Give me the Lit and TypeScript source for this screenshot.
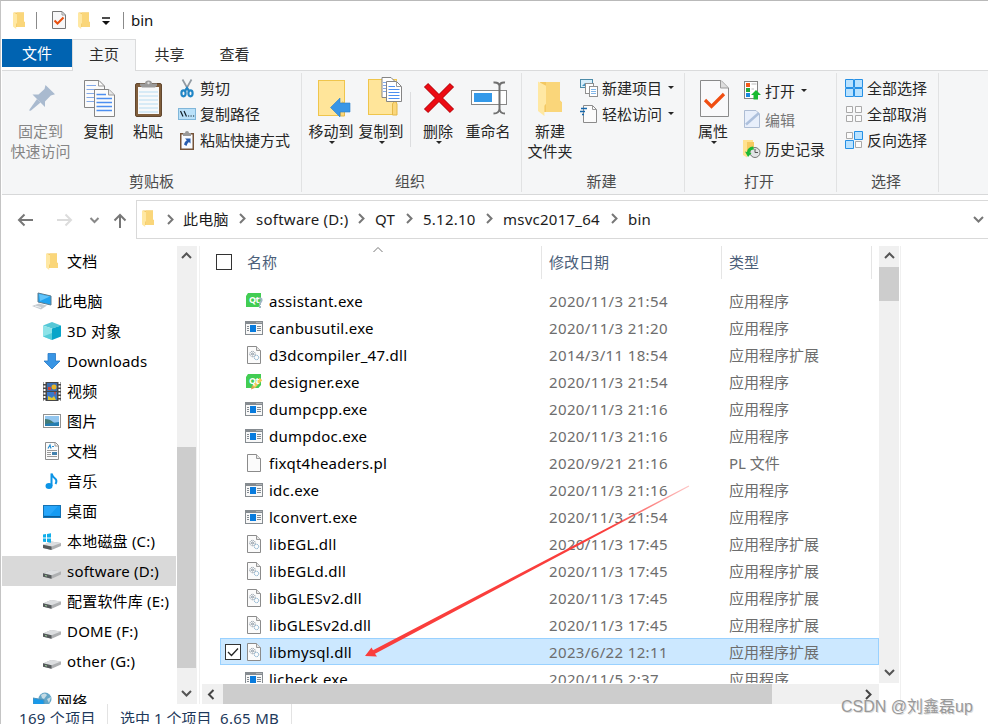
import { LitElement, html, css, svg, nothing } from "lit";
import { customElement, property } from "lit/decorators.js";
import { classMap } from "lit/directives/class-map.js";

const icon = (w: number, h: number, body: unknown) =>
  html`<svg width=${w} height=${h} viewBox="0 0 ${w} ${h}" fill="none">${body}</svg>`;

const folder = (w: number, h: number) => html`<svg width=${w} height=${h} viewBox="0 0 12 17" preserveAspectRatio="none" fill="none">
  <path d="M1 .5H11V9.5L12 10.5V15H3Z" fill="#f3c862"/><path d="M4 .5H11V9.5L12 10.5V15H4Z" fill="#fad67a"/>
  <path d="M0 .3 4 2.3V11L3.2 12V17L0 14.6Z" fill="#ffe8a3"/></svg>`;

const page = svg`<path d="M.5.5H9.5L13.5 4.5V17.5H.5Z" fill="#fbfbfb" stroke="#8b8b8b"/><path d="M9.5.5V4.5H13.5" fill="#e6e6e6" stroke="#999"/>`;

const icons: Record<string, () => unknown> = {
  folder: () => folder(12, 17),
  folderBig: () => folder(24, 35),
  check: () => icon(14, 18, svg`<path d="M.5.5H10L13.5 4V17.5H.5Z" fill="#f7f7f8" stroke="#777"/><path d="M10 .5V4H13.5" stroke="#999"/><path d="M2.5 9.5 5.5 12.5 11.5 6.5" stroke="#e8500f" stroke-width="2"/>`),
  pin: () => icon(28, 28, svg`<g fill="#a9bacf"><path d="M17.5 1 27 10.300 22.800 11.500 17 17.500V23L4.500 10.500H10.500L16.500 5Z"/><path d="M9 15 12.500 18.500 3 26.500 1.500 27V25.500Z"/></g>`),
  copy: () => icon(31, 37, svg`<path d="M.5.500H15L20.500 6V27.500H.5Z" fill="#fbfbfb" stroke="#858585"/><path d="M14.500.5V6H20" stroke="#999"/><path d="M2.500 5.500H12M2.500 9.500H18M2.500 13.500H18M2.500 17.500H18M2.500 21.500H18" stroke="#83a9e8"/><path d="M10.500 9.500H25L30.500 15V36.500H10.500Z" fill="#fbfbfb" stroke="#858585"/><path d="M24.500 9.500V15H30" fill="#e7e7e7" stroke="#999"/><path d="M12.500 14.500H22M12.500 18.500H28M12.500 22.500H28M12.500 26.500H28M12.500 30.500H28" stroke="#4d8ff0" stroke-width="1.300"/>`),
  paste: () => icon(27, 37, svg`<rect x=".5" y="3.500" width="26" height="33" rx="1.500" fill="#805e3c" stroke="#61472f"/><rect x="3" y="7" width="21" height="27" fill="#f8f9fa"/><path d="M4 12H23M4 16H23M4 20H23M4 24H23M4 28H23M4 32H23" stroke="#b7dcf2"/><path d="M5 3.500H10Q10 .5 13.500 .5T17 3.500H22V5.500L20 7.500H7L5 5.500Z" fill="#9a9a9a"/><circle cx="13.500" cy="3" r="1.200" fill="#ddd"/>`),
  cut: () => icon(18, 19, svg`<path d="M4.500.5 11.500 13M13.500.5 6.500 13" stroke="#929aa2" stroke-width="1.700"/><g stroke="#2186c6" stroke-width="2.200"><ellipse cx="5.500" cy="14.300" rx="2.100" ry="3"/><ellipse cx="12.500" cy="14.300" rx="2.100" ry="3"/><path d="M7 12 9 9 11 12"/></g>`),
  path: () => icon(18, 12, svg`<rect x=".5" y=".5" width="17" height="11" fill="#b9e0f8" stroke="#80b6d9"/><path d="M2.500 3 5 8.500M6 3 8.500 8.500M10 8H11.200M12.500 8H13.700M15 8H16.200" stroke="#12202a" stroke-width="1.200"/>`),
  shortcut: () => icon(14, 19, svg`<rect x=".75" y="2.750" width="12.500" height="15.500" fill="#f8fbff" stroke="#755338" stroke-width="1.500"/><path d="M3 2H5Q5 0 7 0T9 2H11V5H3Z" fill="#999"/><path d="M5 7.500H10.500V12.500L8.900 11Q7 12.500 6.500 15L4 13.500Q4.500 10.500 6.800 9.200Z" fill="#275cae"/>`),
  moveTo: () => icon(33, 37, svg`<rect x=".5" y=".5" width="26" height="35" fill="#ffe59a" stroke="#efc54c"/><path d="M22.500 36V25Q25 19 26.500 25V36Z" fill="#fbd77b" stroke="#e4b84a"/><path d="M12.500 27.500 22 18V23H32V32H22V37Z" fill="#3996e6" stroke="#287fc9" stroke-width=".6"/>`),
  copyTo: () => icon(34, 39, svg`<rect x=".5" y="2.500" width="28" height="35" fill="#ffe59a" stroke="#efc54c"/><path d="M24.500 38V27Q27 22 29 27V38Z" fill="#fbd77b" stroke="#e4b84a"/><path d="M14 .5H23L27.500 5V20.500H14Z" fill="#fff" stroke="#858585"/><path d="M15 5.500H23M15 8.500H20M15 11.500H20M15 14.500H20" stroke="#83a9e8"/><path d="M18.500 4.500H28.500L33.500 9.500V24.500H18.500Z" fill="#fff" stroke="#858585"/><path d="M28.500 4.500V9.500H33" stroke="#999"/><path d="M20.500 9.500H27M20.500 12.500H31.500M20.500 15.500H31.500M20.500 18.500H31.500M20.500 21.500H31.500" stroke="#4d8ff0"/>`),
  remove: () => icon(32, 32, svg`<path d="M3 3 29 29M29 3 3 29" stroke="#b50c12" stroke-width="6"/><path d="M3.500 3.500 28.500 28.500M28.500 3.500 3.500 28.500" stroke="#ec0b13" stroke-width="4.300"/>`),
  rename: () => icon(37, 34, svg`<rect x=".5" y="9.500" width="35" height="14" fill="#fff" stroke="#878787"/><rect x="3" y="12" width="18" height="9" fill="#3399e9"/><path d="M22.500 1.500Q28 1 28.500 5Q29 1 34 1.500M28.500 5V28M22.500 32.500Q28 32.500 28.500 28Q29 32.500 34 32.500" stroke="#707070" stroke-width="2"/>`),
  newItem: () => icon(18, 19, svg`<rect x=".5" y=".5" width="12" height="8" fill="#d8effb" stroke="#4c8ba8"/><path d="M2 7 5 4 8 7Z" fill="#4596c4"/><rect x="5.500" y="4.500" width="8" height="10" fill="#fff" stroke="#909090"/><rect x="9.500" y="7.500" width="8" height="10" fill="#fff" stroke="#909090"/><path d="M11 10.500H16M11 12.500H16M11 14.500H16" stroke="#83b7e9"/>`),
  easy: () => icon(18, 18, svg`<path d="M3.500.5H12.500L16.500 4.500V17.500H3.500Z" fill="#fbfbfb" stroke="#8b8b8b"/><path d="M12.500.5V4.500H16.500" stroke="#999"/><path d="M1 3.500H7M0 6.500H5M2 9.500H4" stroke="#1769ad" stroke-width="1.300"/>`),
  props: () => icon(29, 37, svg`<path d="M.5.500H21L28.500 8V36.500H.5Z" fill="#f9f9fa" stroke="#8a8a8a"/><path d="M20.500.500V8H28" fill="#ddd" stroke="#999"/><path d="M5 20 11.500 26.500 24 14" stroke="#f04e12" stroke-width="3.200"/>`),
  open: () => icon(18, 19, svg`<rect x="1.500" y=".5" width="13" height="17" fill="#fff" stroke="#858585"/><rect x="3" y="2" width="4" height="4" fill="#f35a18"/><rect x="3" y="7" width="4" height="4" fill="#23aa3b"/><rect x="3" y="12" width="4" height="4" fill="#1686df"/><path d="M8.500 3H13.500M8.500 8H11" stroke="#bbb"/><path d="M8 14 13 9 18 14H15V18.500H10.500V14Z" fill="#19ba31"/>`),
  edit: () => icon(18, 19, svg`<path d="M1.500.500H13L16.500 4V17.500H1.500Z" fill="#e8effb" stroke="#aebdd4"/><path d="M3 14.500 16 3" stroke="#adc0dc" stroke-width="2.500"/>`),
  history: () => html`${icon(18, 18, svg`<path d="M0 0H10V15L4 13.500V17.500L0 15Z" fill="#ffe291"/><path d="M4 2H11V14H4Z" fill="#f6ca60"/><circle cx="12" cy="12.500" r="5" fill="#e1e4e5" stroke="#777"/><path d="M12 9V12.500H15" stroke="#555"/><path d="M10 6.500Q4.500 7 4 12L2 11.500 5 17 8.500 13 6.500 12.500Q7.500 9.500 11 9.500Z" fill="#1cb936"/>`)}`,
  all: () => icon(18, 18, svg`<g fill="#b9e2ff" stroke="#2690e5"><path d="M.5.500H8.500V8.500H.5ZM9.500.5H17.500V8.500H9.500ZM.5 9.500H8.500V17.500H.5ZM9.500 9.500H17.500V17.500H9.500Z"/></g>`),
  none: () => icon(18, 18, svg`<g fill="#fbfbfb" stroke="#a9a9a9"><path d="M1.500 1.500H7.500V7.500H1.500ZM10.500 1.500H16.500V7.500H10.500ZM1.500 10.500H7.500V16.500H1.500ZM10.500 10.500H16.500V16.500H10.500Z"/></g>`),
  invert: () => icon(18, 18, svg`<g fill="#fbfbfb" stroke="#a9a9a9"><path d="M1.500 1.500H7.500V7.500H1.500ZM10.500 10.500H16.500V16.500H10.500Z"/></g><g fill="#b9e2ff" stroke="#2690e5"><path d="M9.500.5H17.500V8.500H9.500ZM.5 9.500H8.500V17.500H.5Z"/></g>`),
  pc: () => icon(20, 18, svg`<path d="M6 1 19 4V13L6 10Z" fill="#20a2ef" stroke="#5c7c8f"/><path d="M7 2 18 4.500 8 9Z" fill="#62c4fa"/><path d="M0 14 7 11.500 15 13.500 9 17.500Z" fill="#c5cbd0"/><path d="M3 14 9 15.500" stroke="#eef1f3"/>`),
  cube: () => icon(18, 18, svg`<path d="M0 3.500 9 0 18 3.500 9 6.500Z" fill="#55c7d6"/><path d="M0 3.500 9 6.500V18L0 14.500Z" fill="#8de3e8"/><path d="M18 3.500 9 6.500V18L18 14.500Z" fill="#08a5c9"/><path d="M0 14.500 9 11V18Z" fill="#55ccd8"/>`),
  down: () => icon(18, 18, svg`<path d="M5 1.500H12.500V9H17L9 17 1 9H5Z" fill="#3995e4" stroke="#2679c5" stroke-width=".8"/>`),
  video: () => icon(18, 19, svg`<rect width="18" height="19" fill="#474747"/><path d="M1.500 0V19M16.500 0V19" stroke="#fff" stroke-width="2" stroke-dasharray="2 1.500"/><rect x="4" y="1" width="10" height="8" fill="#3c6eb1"/><rect x="4" y="10" width="10" height="8" fill="#3979cb"/><circle cx="11" cy="5" r="2.500" fill="#e8b629"/><path d="M5 8V5H8V8ZM11 10H13L12 14Z" fill="#d04538"/><path d="M5 18V14L9 16 11 14 13 18Z" fill="#e2c630"/>`),
  picture: () => icon(18, 14, svg`<rect x=".5" y=".5" width="17" height="13" fill="#fff" stroke="#929292"/><rect x="2" y="2" width="14" height="10" fill="#93c6ef"/><path d="M2 5Q7 5 10 8T16 9V12H2Z" fill="#417b78"/><path d="M2 10 16 8V12H2Z" fill="#267db1"/>`),
  doc: () => icon(18, 18, svg`<path d="M2.500.5H12.500L15.500 3.500V17.500H2.500Z" fill="#fbfbfb" stroke="#8d8d8d"/><path d="M12 .5V4H15.500" stroke="#999"/><path d="M4 8.500H14M4 10.500H8M4 12.500H8M4 14.500H14" stroke="#999"/><path d="M5 6.500 7 3 8 6.500M9 4.500H11" stroke="#2b8fd0" stroke-width="1.200"/><path d="M9 10H14V13H9Z" fill="#4481ad"/>`),
  music: () => icon(18, 18, svg`<path d="M8.500 14V1.500Q9.500 4.500 12 6.500T12.500 12" stroke="#0c94e6" stroke-width="2"/><ellipse cx="6" cy="14" rx="3.500" ry="3" fill="#0c94e6"/>`),
  desktop: () => icon(18, 13, svg`<rect x=".5" y=".5" width="17" height="12" fill="#159bf3" stroke="#1672b2"/><path d="M1 1H15L7 10H1Z" fill="#35adff" opacity=".6"/><path d="M1 11.500H17" stroke="#0c5d99"/>`),
  drive: () => icon(18, 16, svg`<path d="M0 10.500 8 7 18 8.500V11.500L8.500 15.800 0 13.500Z" fill="#aeb0b2"/><path d="M0 10.500 8 7 18 8.500 8.500 12.300Z" fill="#dcdee0"/><path d="M0 10.300 8.500 12.300V15.800L0 13.700Z" fill="#55595b"/><path d="M2 12.500 4 13" stroke="#98cf93"/>`),
  driveC: () => icon(18, 17, svg`<g transform="translate(-1)"><path d="M1 12 9 8.500 19 10V13L9.500 17 1 15Z" fill="#aeb0b2"/><path d="M1 12 9 8.500 19 10 9.500 13.600Z" fill="#dcdee0"/><path d="M1 11.800 9.500 13.600V17L1 15Z" fill="#55595b"/><path d="M0 1.500 4 1V4.500H0ZM5 .9 9 .3V4.500H5ZM0 5.500H4V9L0 8.500ZM5 5.500H9V9.700L5 9.100Z" fill="#10aeea"/></g>`),
  network: () => icon(19, 18, svg`<circle cx="12" cy="7" r="6.500" fill="#65a6c7"/><path d="M8 3Q12 0 14 3L11 7 9 6ZM14 7 18 5 16 11Z" fill="#c5dbe4"/><path d="M0 6 11 8V17L0 15Z" fill="#1999e9" stroke="#4c93bb"/>`),
  exe: () => icon(18, 14, svg`<rect x=".5" y=".5" width="17" height="13" fill="#f8f8f8" stroke="#858b90"/><path d="M0 0H18V3H0Z" fill="#858b90"/><path d="M11.500 1.500H12.500M13.500 1.500H14.500M15.500 1.500H16.500" stroke="#ddd"/><path d="M2 5.500H4M2 7.500H4M2 9.500H4M12 5.500H16M12 7.500H16M12 9.500H16" stroke="#848b91"/><rect x="5" y="4" width="6" height="7" fill="#087bdd"/>`),
  dll: () => html`${icon(14, 18, svg`${page}<g stroke="#8795a2"><circle cx="5.500" cy="8" r="2.700" stroke-dasharray="1.200 .6"/><circle cx="5.500" cy="8" r="1"/><circle cx="9.500" cy="11.500" r="2.200" stroke="#78a6c8" stroke-dasharray="1.100 .5"/></g>`)}`,
  file: () => icon(14, 18, page),
  assistant: () => html`<span class="qt">${icon(18, 15, svg`<path d="M3 0H16V11L13.500 14H1V3Z" fill="#42cd53"/><path d="M12 6.500Q13 4.500 15.500 5.500T15 10V12M15 13V15" stroke="#9fb6c4" stroke-width="2"/>`)}<b>Qt</b></span>`,
  designer: () => html`<span class="qt">${icon(18, 16, svg`<path d="M3 0H16V11L13.500 14H1V3Z" fill="#42cd53"/><path d="M8.500 13 16 5" stroke="#f0c65b" stroke-width="3.500"/><path d="M6 15.500 7 11.500 9.500 14Z" fill="#d8a14e"/>`)}<b>Qt</b></span>`,
};

const chevron = (dir: "up" | "down" | "left" | "right", cls = "") => {
  const d = { up: "M1 7 5.500 2.500 10 7", down: "M1 3 5.500 7.500 10 3", left: "M7.500 1 3 5.500 7.500 10", right: "M3 1 7.500 5.500 3 10" }[dir];
  return html`<svg class=${cls} width="11" height="11" viewBox="0 0 11 11" fill="none"><path d=${d} stroke="currentColor" stroke-width="2"/></svg>`;
};

const base = css`
  * { box-sizing: border-box; }
  svg { display: block; flex: none; }
`;

@customElement("ribbon-button")
class RibbonButton extends LitElement {
  @property() icon = "";
  @property() label = "";
  @property() second = "";
  @property({ type: Boolean }) menu = false;
  @property({ type: Boolean, reflect: true }) dim = false;
  static styles = [base, css`
    :host { display: flex; flex-direction: column; align-items: center; width: 50px; flex: none; color: #262626; }
    :host([dim]) { color: #858585; }
    .icon { height: 46px; display: flex; align-items: center; justify-content: center; }
    .copy, .remove, .rename, .pin { padding-left: 2px; }
    .props { padding-left: 3px; }
    .moveTo { padding-left: 6px; }
    .copyTo { padding-left: 7px; padding-bottom: 3px; }
    .text { line-height: 20px; white-space: nowrap; display: block; }
    .arrow { border: 3.5px solid transparent; border-top: 3.5px solid #262626; border-bottom: 0; margin-left: 2px; }
  `];
  render() {
    return html`<span class="icon ${this.icon}">${icons[this.icon]?.()}</span><span class="text">${this.label}</span>
      ${this.second ? html`<span class="text">${this.second}</span>` : nothing}
      ${this.menu ? html`<i class="arrow"></i>` : nothing}`;
  }
}

@customElement("ribbon-row")
class RibbonRow extends LitElement {
  @property() icon = "";
  @property() label = "";
  @property({ type: Boolean }) menu = false;
  @property({ type: Boolean, reflect: true }) dim = false;
  static styles = [base, css`
    :host { display: flex; align-items: center; height: 26px; color: #262626; white-space: nowrap; }
    :host([dim]) { color: #777; }
    .icon { width: 18px; margin-right: 4px; display: flex; justify-content: center; }
    .arrow { border: 3.5px solid transparent; border-top: 3.5px solid #262626; border-bottom: 0; margin: -1px 0 0 6px; }
  `];
  render() {
    return html`<span class="icon">${icons[this.icon]?.()}</span>${this.label}${this.menu ? html`<i class="arrow"></i>` : nothing}`;
  }
}

const tree = [
  ["folder", "文档", "child gap"], ["pc", "此电脑", "root"], ["cube", "3D 对象", "child"], ["down", "Downloads", "child"],
  ["video", "视频", "child"], ["picture", "图片", "child"], ["doc", "文档", "child"], ["music", "音乐", "child"],
  ["desktop", "桌面", "child"], ["driveC", "本地磁盘 (C:)", "child"], ["drive", "software (D:)", "child current"],
  ["drive", "配置软件库 (E:)", "child"], ["drive", "DOME (F:)", "child"], ["drive", "other (G:)", "child gap"], ["network", "网络", "root"],
];

const files = [
  ["assistant", "assistant.exe", "2020/11/3 21:54", "应用程序"],
  ["exe", "canbusutil.exe", "2020/11/3 21:20", "应用程序"],
  ["dll", "d3dcompiler_47.dll", "2014/3/11 18:54", "应用程序扩展"],
  ["designer", "designer.exe", "2020/11/3 21:54", "应用程序"],
  ["exe", "dumpcpp.exe", "2020/11/3 21:16", "应用程序"],
  ["exe", "dumpdoc.exe", "2020/11/3 21:16", "应用程序"],
  ["file", "fixqt4headers.pl", "2020/9/21 21:16", "PL 文件"],
  ["exe", "idc.exe", "2020/11/3 21:16", "应用程序"],
  ["exe", "lconvert.exe", "2020/11/3 21:54", "应用程序"],
  ["dll", "libEGL.dll", "2020/11/3 17:45", "应用程序扩展"],
  ["dll", "libEGLd.dll", "2020/11/3 17:45", "应用程序扩展"],
  ["dll", "libGLESv2.dll", "2020/11/3 17:45", "应用程序扩展"],
  ["dll", "libGLESv2d.dll", "2020/11/3 17:45", "应用程序扩展"],
  ["dll", "libmysql.dll", "2023/6/22 12:11", "应用程序扩展"],
  ["exe", "licheck.exe", "2020/11/5 2:37", "应用程序"],
];

const crumbs = ["此电脑", "software (D:)", "QT", "5.12.10", "msvc2017_64", "bin"];

@customElement("app-root")
class AppRoot extends LitElement {
  static styles = [base, css`
    :host { display: block; position: relative; width: 988px; height: 724px; overflow: hidden; background: #fff; color: #111;
      font: 15px/20px "Noto Sans", "Noto Sans CJK SC", sans-serif; border-left: 1px solid #c4c4c4; padding-left: 1px; border-top: 1px solid #b9b9b9; }
    .title { height: 38px; display: flex; align-items: center; padding-left: 11px; }
    .title i { width: 1px; height: 17px; background: #8a8a8a; }
    .title .s1 { margin: 0 15px 0 11px; }
    .title .f2 { margin: 0 12px 0 12px; }
    .title .s2 { margin: 0 7px 0 13px; }
    .tabs { height: 32px; display: flex; border-bottom: 1px solid #dadbdc; color: #2b2b2b; }
    .tab { width: 65px; line-height: 30px; height: 31px; text-align: center; }
    .tab.file { width: 70px; height: 28px; background: #0063b1; color: #fff; line-height: 28px; }
    .tab.active { width: 64px; height: 32px; background: #f5f6f7; border: 1px solid #dadbdc; border-bottom: 0; line-height: 28px; }
    .tab.active + .tab { padding-left: 2px; } .tab:last-child { padding-left: 2px; }
    .ribbon { height: 124px; background: #f5f6f7; border-bottom: 1px solid #d7d8d9; display: flex; }
    .group { height: 119px; padding-top: 4px; margin-top: 2px; border-right: 1px solid #e1e2e3; display: flex; flex-direction: column; flex: none; }
    .group .body { display: flex; height: 94px; }
    .group .name { text-align: center; line-height: 20px; padding-right: 3px; color: #4b4b4b; }
    .g1 { width: 300px; } .g2 { width: 220px; } .g3 { width: 163px; } .g4 { width: 152px; } .g5 { width: 102px; }
    .g1 .name { padding-right: 0; }
    .ribbon ribbon-button { margin-top: -2px; }
    .rows { margin-top: -2px; }
    .g1 .pin { width: 77px; } .g1 .copy { width: 39px; } .g1 .paste { width: 60px; }
    .g2 .body { padding-left: 4px; }
    .divider { width: 1px; height: 55px; margin: 15px 2px 0 4px; background: #dcdddf; }
    .g3 .body, .g4 .body { padding-left: 3px; }
    .g3 .rows { margin-left: 5px; } .g4 .rows { margin-left: 5px; margin-top: -1px; }
    .g4 ribbon-row { height: 29px; }
    .g5 .rows { margin-left: 8px; }
    .nav { height: 51px; display: flex; padding-top: 5px; color: #777; }
    .arrows { width: 134px; height: 39px; }
    .address { flex: 1; height: 39px; border: 1px solid #d9d9d9; border-right: 0; display: flex; align-items: center; padding: 0 0 2px 5px; }
    .address .first { margin: 1px 7px 0 11px; }
    .crumbs { flex: 1; display: grid; grid-template-columns: 73px 119px 48px 80px 125px 60px; color: #1c1c1c; }
    .crumb { display: flex; justify-content: space-between; align-items: center; padding-right: 8px; white-space: nowrap; letter-spacing: .25px; }
    .crumb svg, .first { color: #777; }
    .address .drop { margin: 2px 6px 0 0; }
    .content { height: 458px; display: flex; }
    .tree { width: 174px; overflow: hidden; color: #000; }
    .node { height: 30px; display: flex; align-items: center; white-space: nowrap; letter-spacing: .2px; }
    .node .pic { width: 20px; display: flex; justify-content: center; margin-right: 5px; }
    .node.child { padding-left: 40px; } .node.root { padding-left: 31px; }
    .node.root .pic { margin-right: 4px; }
    .node.root svg { position: relative; left: -1px; }
    .node.gap { margin-bottom: 10px; }
    .node.current { background: #d9d9d9; }
    .vbar { width: 20px; background: #f0f0f0; display: flex; flex-direction: column; align-items: center; flex: none; color: #555; }
    .vbar svg { margin: 5px 0; }
    .vbar .thumb { width: 20px; background: #cdcdcd; }
    .nodes-bar { margin-left: 1px; padding-right: 1px; }
    .nodes-bar .thumb { height: 221px; margin-top: 180px; width: 19px; }
    .nodes-bar svg:last-child { margin-top: 20px; }
    .main { width: 681px; margin-left: 2px; border-left: 1px solid #f0f0f0; display: flex; flex-direction: column; }
    .head { height: 33px; display: grid; grid-template-columns: 342px 180px 150px; color: #4c607a; flex: none; line-height: 32px; }
    .head div { border-right: 1px solid #e5e5e5; padding-left: 7px; position: relative; }
    .head div:first-child { display: flex; padding-left: 16px; }
    .head .sort { position: absolute; left: 172px; top: 0; }
    .box { width: 16px; height: 16px; border: 1px solid #333; background: #fff; flex: none; }
    .head .box { margin: 8px 15px 0 0; }
    .list { height: 404px; padding-top: 8px; overflow: hidden; flex: none; }
    .row { display: grid; grid-template-columns: 22px 26px 280px 180px 1fr; align-items: center; margin-left: 20px; width: 659px; height: 27px; border: 1px solid transparent; color: #6d6d6d; white-space: nowrap; }
    .row .name { color: #000; letter-spacing: .25px; }
    .row .date { letter-spacing: .36px; }
    .row .pic { display: flex; justify-content: center; width: 18px; margin-left: 2px; }
    .row .box { margin-left: 4px; visibility: hidden; display: flex; }
    .row.picked { background: #cce8ff; border-color: #99d1ff; }
    .row.picked .box { visibility: visible; }
    .qt { position: relative; display: block; }
    .qt b { position: absolute; left: 4px; top: 2px; font: bold 9px/10px "Noto Sans", sans-serif; color: #fff; letter-spacing: -.5px; }
    .hbar { height: 20px; margin: 1px 0 0 2px; width: 677px; background: #f0f0f0; display: flex; align-items: center; color: #444; flex: none; }
    .hbar .thumb { width: 549px; height: 20px; background: #cdcdcd; margin-left: 6px; }
    .hbar svg:first-child { margin-left: 4px; } .hbar svg:last-child { margin: 0 5px 0 auto; }
    .files-bar { height: 437px; margin-left: -1px; }
    .files-bar .thumb { height: 34px; }
    .files-bar svg:last-child { margin-top: auto; }
    .edge { width: 1px; margin-left: 1px; background: #f0f0f0; }
    .status { display: flex; color: #1e395b; padding-left: 17px; line-height: 28px; white-space: nowrap; }
    .status i { width: 1px; height: 20px; background: #e3e3e3; }
    .status .count { width: 88px; letter-spacing: .3px; } .status .sel { width: 100px; margin-left: 12px; } .status .size { width: 71px; letter-spacing: .3px; }
    .mark { position: absolute; left: 840px; top: 696px; font: 16px/20px "Liberation Sans", "Noto Sans CJK SC", sans-serif; color: #999; text-shadow: 1px 1px 0 #ddd; white-space: nowrap; }
    .pointer { position: absolute; left: 359px; top: 479px; }
  `];

  render() {
    return html`
      <div class="title">
        ${icons.folder()}<i class="s1"></i>${icons.check()}<span class="f2">${icons.folder()}</span>
        <svg width="8" height="9" viewBox="0 0 8 9"><path d="M0 2H8" stroke="#111" stroke-width="1.500"/><path d="M0 5H8L4 9Z" fill="#111"/></svg>
        <i class="s2"></i>bin
      </div>
      <div class="tabs">
        <div class="tab file">文件</div><div class="tab active">主页</div><div class="tab">共享</div><div class="tab">查看</div>
      </div>
      <div class="ribbon">
        <div class="group g1"><div class="body">
          <ribbon-button class="pin" icon="pin" label="固定到" second="快速访问" dim></ribbon-button>
          <ribbon-button class="copy" icon="copy" label="复制"></ribbon-button>
          <ribbon-button class="paste" icon="paste" label="粘贴"></ribbon-button>
          <div class="rows"><ribbon-row icon="cut" label="剪切"></ribbon-row><ribbon-row icon="path" label="复制路径"></ribbon-row><ribbon-row icon="shortcut" label="粘贴快捷方式"></ribbon-row></div>
        </div><div class="name">剪贴板</div></div>
        <div class="group g2"><div class="body">
          <ribbon-button icon="moveTo" label="移动到" menu></ribbon-button><ribbon-button icon="copyTo" label="复制到" menu></ribbon-button>
          <i class="divider"></i>
          <ribbon-button icon="remove" label="删除" menu></ribbon-button><ribbon-button icon="rename" label="重命名"></ribbon-button>
        </div><div class="name">组织</div></div>
        <div class="group g3"><div class="body">
          <ribbon-button icon="folderBig" label="新建" second="文件夹"></ribbon-button>
          <div class="rows"><ribbon-row icon="newItem" label="新建项目" menu></ribbon-row><ribbon-row icon="easy" label="轻松访问" menu></ribbon-row></div>
        </div><div class="name">新建</div></div>
        <div class="group g4"><div class="body">
          <ribbon-button icon="props" label="属性" menu></ribbon-button>
          <div class="rows"><ribbon-row icon="open" label="打开" menu></ribbon-row><ribbon-row icon="edit" label="编辑" dim></ribbon-row><ribbon-row icon="history" label="历史记录"></ribbon-row></div>
        </div><div class="name">打开</div></div>
        <div class="group g5"><div class="body">
          <div class="rows"><ribbon-row icon="all" label="全部选择"></ribbon-row><ribbon-row icon="none" label="全部取消"></ribbon-row><ribbon-row icon="invert" label="反向选择"></ribbon-row></div>
        </div><div class="name">选择</div></div>
      </div>
      <div class="nav">
        <svg class="arrows" viewBox="0 0 134 39" fill="none" stroke-width="2">
          <path d="M31 20H17M22.500 14.500 17 20 22.500 25.500" stroke="#777"/><path d="M55 20H69M63.500 14.500 69 20 63.500 25.500" stroke="#dcdcdc"/>
          <path d="M88.500 18 92.500 22 96.500 18" stroke="#888"/><path d="M118 28V15M112.500 20.500 118 15 123.500 20.500" stroke="#777"/>
        </svg>
        <div class="address">${icons.folder()}${chevron("right", "first")}
          <div class="crumbs">${crumbs.map((c, i) => html`<span class="crumb">${c}${i < crumbs.length - 1 ? chevron("right") : nothing}</span>`)}</div>
          ${chevron("down", "drop")}
        </div>
      </div>
      <div class="content">
        <div class="tree">${tree.map(([ic, text, cls]) => html`<div class="node ${cls}"><span class="pic">${icons[ic]()}</span>${text}</div>`)}</div>
        <div class="vbar nodes-bar">${chevron("up")}<div class="thumb"></div>${chevron("down")}</div>
        <div class="main">
          <div class="head">
            <div><span class="box"></span>名称<svg class="sort" width="12" height="8" viewBox="0 0 12 8" fill="none"><path d="M1.500 6 6 1.500 10.500 6" stroke="#777"/></svg></div>
            <div>修改日期</div><div>类型</div>
          </div>
          <div class="list">${files.map(([ic, name, date, type]) => html`
            <div class=${classMap({ row: true, picked: name === "libmysql.dll" })}>
              <span class="box"><svg width="14" height="14" viewBox="0 0 14 14" fill="none"><path d="M2 7 5.500 10.500 12 3.500" stroke="#222" stroke-width="1.300"/></svg></span>
              <span class="pic">${icons[ic]()}</span><span class="name">${name}</span><span class="date">${date}</span><span>${type}</span>
            </div>`)}</div>
          <div class="hbar">${chevron("left")}<div class="thumb"></div>${chevron("right")}</div>
        </div>
        <div class="vbar files-bar">${chevron("up")}<div class="thumb"></div>${chevron("down")}</div>
        <i class="edge"></i>
      </div>
      <div class="status"><span class="count">169 个项目</span><i></i><span class="sel">选中 1 个项目</span><span class="size">6.65 MB</span><i></i></div>
      <div class="mark">CSDN @刘鑫磊up</div>
      <svg class="pointer" width="336" height="184" viewBox="360 480 336 184">
        <defs><linearGradient id="fade" x1="365" y1="656" x2="689" y2="486" gradientUnits="userSpaceOnUse"><stop offset=".75" stop-color="#fa3e3c"/><stop offset="1" stop-color="#fa3e3c" stop-opacity=".3"/></linearGradient></defs>
        <path d="M365 656 371.500 647.500 373 650.300 688.700 485.500 689.200 486.500 375 653.800 377 656.500Z" fill="url(#fade)"/>
      </svg>`;
  }
}
